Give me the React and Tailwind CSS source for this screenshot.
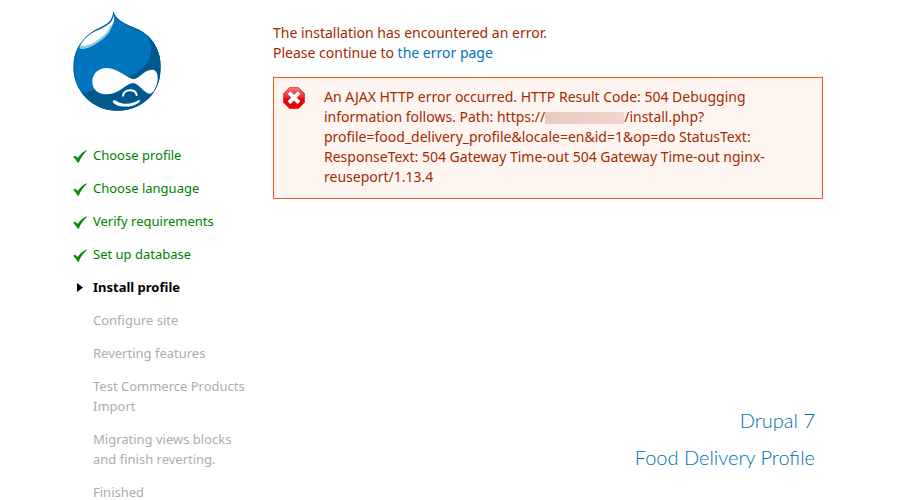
const tasks = [
  { label: 'Choose profile', status: 'done' },
  { label: 'Choose language', status: 'done' },
  { label: 'Verify requirements', status: 'done' },
  { label: 'Set up database', status: 'done' },
  { label: 'Install profile', status: 'active' },
  { label: 'Configure site', status: 'todo' },
  { label: 'Reverting features', status: 'todo' },
  { label: 'Test Commerce Products Import', status: 'todo' },
  { label: 'Migrating views blocks and finish reverting.', status: 'todo' },
  { label: 'Finished', status: 'todo' },
]

const statusClass = {
  done: 'text-[#008000]',
  active: 'text-black font-bold',
  todo: 'text-[#adadad]',
}

const dropPath =
  'M160 34C164 48 174 59 193 70C212 80 231 84 250 97C281 119 302 155 302 198C302 236 293 262 275 285C249 316 213 332 171 332C98 332 40 273 40 201C40 155 63 119 93 98C109 87 128 81 143 70C155 60 159 48 160 34Z'

function Logo() {
  return (
    <svg viewBox="39 33 264 300" className="w-[88px] h-[100px]" role="img" aria-label="Drupal">
      <defs>
        <clipPath id="drop">
          <path d={dropPath} />
        </clipPath>
      </defs>
      <g clipPath="url(#drop)">
        <path fill="#0074bd" d="M30 30h280v310H30z" />
        <path fill="#00598e" d="M262 105C282 141 275 181 244 207C228 221 210 229 190 238L90 274C78 279 64 282 48 274L60 340H310V100Z" />
        <path fill="#81cee8" d="M159 60C159 84 146 103 130 116C112 130 94 141 75 146C68 148 61 148 58 144L60 130L150 70Z" />
        <path fill="#fff" d="M161 46C164 58 163 67 157 74C150 79 148 81 146 88C136 105 119 117 104 126C90 134 76 140 63 137C65 120 77 108 97 98C115 89 134 84 148 72C156 65 159 57 161 46Z" />
        <path fill="none" stroke="#00598e" strokeWidth="4" d={dropPath} />
      </g>
      <path fill="#fff" d="M141 204C171 204 196 230 219 238C240 235 253 208 277 209C290 210 294 223 293 239C291 258 282 277 271 281C254 283 238 251 220 249C199 249 177 283 142 283C114 283 97 268 97 245C97 221 115 204 141 204Z" />
      <path fill="none" stroke="#fff" strokeWidth="6" strokeLinecap="round" d="M189 287C191 277 200 271 210 271C221 271 228 276 230 285" />
      <path fill="#fff" d="M159 302C164 299 169 303 174 306C192 315 219 312 235 301C239 298 242 302 239 305C221 323 180 324 163 311C159 308 157 305 159 302Z" />
    </svg>
  )
}

function CheckMark() {
  return (
    <svg viewBox="0 0 42 39" className="w-[14px] h-[13px]" aria-hidden="true">
      <path fill="#078a0d" d="M0 20L7 17L14 24C21 14 31 5 41 1L42 2C32 11 23 23 17 38L14 38C10 30 6 25 0 20Z" />
    </svg>
  )
}

function ErrorIcon() {
  return (
    <svg viewBox="0 0 66 66" className="w-[22px] h-[22px] flex-shrink-0" aria-hidden="true">
      <defs>
        <linearGradient id="red" x1="0" y1="0" x2="0" y2="1">
          <stop offset="0" stopColor="#ef7777" />
          <stop offset="0.45" stopColor="#e72c31" />
          <stop offset="0.55" stopColor="#e60005" />
          <stop offset="1" stopColor="#f40000" />
        </linearGradient>
      </defs>
      <path fill="url(#red)" stroke="#e0252b" strokeWidth="2" strokeLinejoin="round" d="M20 1H46L65 20V46L46 65H20L1 46V20Z" />
      <path stroke="#a94a50" strokeWidth="14" d="M19 20L47 48M47 20L19 48" />
      <path stroke="#fff" strokeWidth="11" d="M18 17L48 47M48 17L18 47" />
    </svg>
  )
}

function TaskItem({ label, status }) {
  return (
    <li className={`flex ${statusClass[status]}`} aria-current={status === 'active' ? 'step' : undefined}>
      <span className="w-5 flex-shrink-0 pt-[5px]">
        {status === 'done' && <CheckMark />}
        {status === 'active' && (
          <svg viewBox="0 0 6 9" className="w-1.5 h-[9px] mt-px ml-1" aria-hidden="true">
            <path d="M0 0L6 4.5L0 9Z" />
          </svg>
        )}
      </span>
      <span>{label}</span>
    </li>
  )
}

export default function App() {
  return (
    <div className="flex gap-5 bg-white pl-[73px] pr-[77px] pt-[11px] text-[13px] leading-5 font-['Noto_Sans',sans-serif]">
      <aside className="w-[180px] flex-shrink-0">
        <Logo />
        <ol className="mt-[34px] flex flex-col gap-[13px]">
          {tasks.map((task) => (
            <TaskItem key={task.label} {...task} />
          ))}
        </ol>
      </aside>

      <main className="flex-1 min-w-0 flex flex-col pt-3 text-[14px] leading-5 text-[#a32b00]">
        <p>
          The installation has encountered an error.
          <br />
          Please continue to <a href="#error" className="text-[#0074bd]">the error page</a>
        </p>

        <div role="alert" className="mt-[14px] flex gap-[19px] border border-[#f9571f] bg-[#fef5f1] py-[9px] pl-[9px] pr-2.5">
          <ErrorIcon />
          <p className="pb-0.5">
            An AJAX HTTP error occurred. HTTP Result Code: 504 Debugging
            <br />
            information follows. Path: https://
            <span className="inline-block w-[79px] h-3 align-middle bg-linear-to-r from-[#e6cbc1] to-[#f0d5ce]" />
            /install.php?
            <br />
            profile=food_delivery_profile&amp;locale=en&amp;id=1&amp;op=do StatusText:
            <br />
            ResponseText: 504 Gateway Time-out 504 Gateway Time-out nginx-
            <br />
            reuseport/1.13.4
          </p>
        </div>

        <footer className="mt-auto pb-[26px] pr-2 text-right text-[20px] leading-[37px] text-[#006eb3] font-['Lato',sans-serif] font-light">
          <p>Drupal 7</p>
          <p>Food Delivery Profile</p>
        </footer>
      </main>
    </div>
  )
}
